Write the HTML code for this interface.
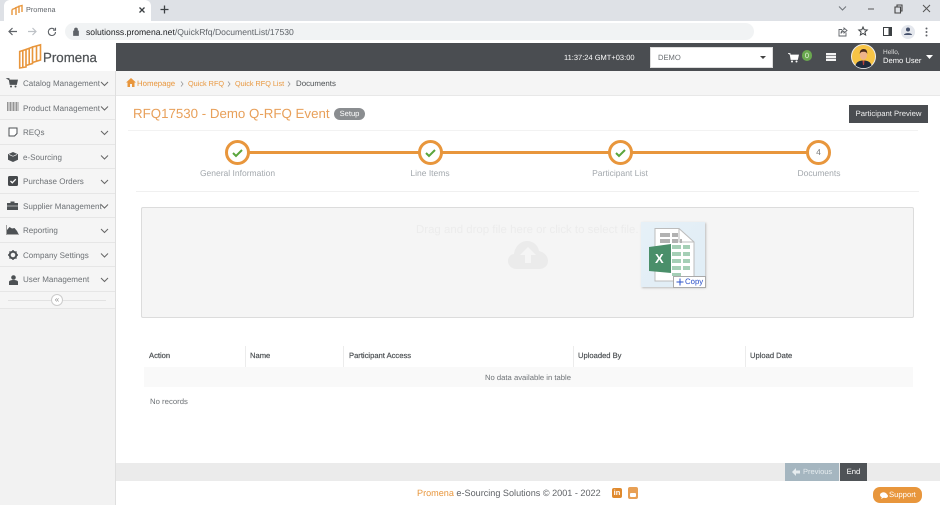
<!DOCTYPE html>
<html><head><meta charset="utf-8"><style>
*{box-sizing:border-box}
html,body{margin:0;padding:0;width:940px;height:505px;overflow:hidden;background:#fff;font-family:"Liberation Sans",sans-serif;text-rendering:geometricPrecision}
.a{position:absolute;white-space:nowrap}
svg{position:absolute;overflow:visible}
.mi{position:absolute;left:0;width:115px;height:24.5px;border-bottom:1px solid #e6e6e6;background:#f5f5f5}
.mi span{position:absolute;left:23px;top:6px;font-size:8.05px;line-height:14px;color:#6e7276;white-space:nowrap}
.st{position:absolute;width:25px;height:25px;border:3px solid #e8963c;border-radius:50%;background:#fff;top:140px}
.sl{position:absolute;top:167px;font-size:8.5px;line-height:12px;color:#a3a8ad;white-space:nowrap;transform:translateX(-50%)}
.th{position:absolute;top:350px;font-size:7.6px;line-height:12px;color:#4d5154;-webkit-text-stroke:.2px #4d5154;white-space:nowrap}
.tv{position:absolute;top:346px;width:1px;height:21px;background:#ececec}
.bc{position:absolute;top:78px;font-size:7.6px;line-height:12px;color:#e8963c;white-space:nowrap}
</style></head><body>

<!-- browser chrome -->
<div class="a" style="left:0;top:0;width:940px;height:21px;background:#dee1e6"></div>
<div class="a" style="left:4px;top:0;width:147px;height:21px;background:#fff;border-radius:6px 6px 0 0"></div>
<svg style="left:11px;top:5px" width="12" height="11" viewBox="0 0 12 11"><path d="M1 4.500L5 3V10M1 4.500V10M4 3L8 1.500V8M7 1.500L11 .5V7" fill="none" stroke="#e8963c" stroke-width="1.400"/></svg>
<div class="a" style="left:26px;top:4px;font-size:7.300px;line-height:12px;color:#5f6368">Promena</div>
<svg style="left:138px;top:6px" width="8" height="8" viewBox="0 0 8 8"><path d="M1.500 1.500L6.500 6.500M6.500 1.500L1.500 6.500" stroke="#3c4043" stroke-width="1.300"/></svg>
<svg style="left:160px;top:5px" width="9" height="9" viewBox="0 0 9 9"><path d="M4.500 .5V8.500M.5 4.500H8.500" stroke="#3c4043" stroke-width="1.300"/></svg>
<svg style="left:838px;top:5px" width="9" height="7" viewBox="0 0 9 7"><path d="M1 1.500L4.500 5L8 1.500" fill="none" stroke="#70757a" stroke-width="1"/></svg>
<svg style="left:867px;top:8px" width="8" height="2" viewBox="0 0 8 2"><path d="M1 1H7" stroke="#555" stroke-width="1"/></svg>
<svg style="left:894px;top:4px" width="9" height="10" viewBox="0 0 9 10"><path d="M1 3H6.500V9H1ZM3 3V1H8V7H6.500" fill="none" stroke="#444" stroke-width="1.100"/></svg>
<svg style="left:922px;top:4px" width="9" height="9" viewBox="0 0 9 9"><path d="M1 1L8 8M8 1L1 8" stroke="#555" stroke-width="1"/></svg>

<div class="a" style="left:0;top:21px;width:940px;height:22px;background:#fff"></div>
<svg style="left:8px;top:27px" width="10" height="9" viewBox="0 0 10 9"><path d="M9 4.500H1.500M4.500 1L1 4.500L4.500 8" fill="none" stroke="#5f6368" stroke-width="1.200"/></svg>
<svg style="left:27px;top:27px" width="10" height="9" viewBox="0 0 10 9"><path d="M1 4.500H8.500M5.500 1L9 4.500L5.500 8" fill="none" stroke="#bdc1c6" stroke-width="1.200"/></svg>
<svg style="left:47px;top:27px" width="10" height="10" viewBox="0 0 10 10"><path d="M8.500 5A3.600 3.600 0 1 1 7.400 2.300M8.500 .8V3.200H6.100" fill="none" stroke="#5f6368" stroke-width="1.100"/></svg>
<div class="a" style="left:65px;top:23px;width:689px;height:17px;border-radius:9px;background:#f1f3f4"></div>
<svg style="left:73px;top:27px" width="6" height="9" viewBox="0 0 6 9"><path d="M.5 4H5.500V8.500H.5ZM1.500 4V2.500A1.500 1.500 0 0 1 4.500 2.500V4" fill="#5f6368" stroke="#5f6368" stroke-width=".7"/></svg>
<div class="a" style="left:86px;top:25.500px;font-size:8.600px;line-height:13px;color:#202124">solutionss.promena.net<span style="color:#5f6368">/QuickRfq/DocumentList/17530</span></div>
<svg style="left:838px;top:27px" width="10" height="10" viewBox="0 0 10 10"><path d="M8 5.500V9H1V2.500H4M6 1L9 3.500L6 6V4.500C4.500 4.500 3.500 5 3 6.500C3 4.500 4.300 2.800 6 2.700Z" fill="none" stroke="#5f6368" stroke-width=".9"/></svg>
<svg style="left:858px;top:26px" width="10" height="10" viewBox="0 0 10 10"><path d="M5 1L6.200 3.800L9.200 4L6.900 6L7.600 9L5 7.400L2.400 9L3.100 6L.8 4L3.800 3.800Z" fill="none" stroke="#3c4043" stroke-width="1"/></svg>
<svg style="left:883px;top:27px" width="9" height="9" viewBox="0 0 9 9"><path d="M.5 .5H8.500V8.500H.5Z" fill="#fff" stroke="#3c4043"/><path d="M5.500 .5H8.500V8.500H5.500Z" fill="#3c4043"/></svg>
<div class="a" style="left:901px;top:25px;width:14px;height:14px;border-radius:50%;background:#e4e7ed"></div>
<svg style="left:904px;top:27px" width="8" height="9" viewBox="0 0 8 9"><circle cx="4" cy="2.500" r="2" fill="#44506b"/><path d="M0 8C0 5.500 8 5.500 8 8Z" fill="#44506b"/></svg>
<svg style="left:925px;top:27px" width="3" height="10" viewBox="0 0 3 10"><circle cx="1.500" cy="1.500" r="1" fill="#5f6368"/><circle cx="1.500" cy="5" r="1" fill="#5f6368"/><circle cx="1.500" cy="8.500" r="1" fill="#5f6368"/></svg>

<!-- logo -->
<div class="a" style="left:0;top:43px;width:116px;height:28px;background:#fff"></div>
<svg style="left:19px;top:44px" width="23" height="25" viewBox="0 0 23 25" fill="none" stroke="#e8963c" stroke-width="1.600"><path d="M.7 7.500L7 5.500V23L.7 24ZM3.800 6.800V23.500"/><path d="M7 5.500L13.500 3V19.500L7 21.500M10.200 4.500V20.500"/><path d="M13.500 3L21.500 .8V16L13.500 18.500M17.500 2V17.500"/></svg>
<div class="a" style="left:43px;top:48px;font-size:13.300px;line-height:20px;color:#4f5356;-webkit-text-stroke:.25px #4f5356">Promena</div>

<!-- top header -->
<div class="a" style="left:116px;top:43px;width:824px;height:28px;background:#4a4d51"></div>
<div class="a" style="left:564px;top:52px;font-size:7.500px;line-height:12px;color:#fff">11:37:24 GMT+03:00</div>
<div class="a" style="left:650px;top:47px;width:123px;height:21px;background:#fff;border:1px solid #ddd"></div>
<div class="a" style="left:658px;top:52px;font-size:7.600px;line-height:12px;color:#6b6f73">DEMO</div>
<svg style="left:760px;top:56px" width="6" height="3" viewBox="0 0 6 3"><path d="M0 0H6L3 3Z" fill="#444"/></svg>
<svg style="left:788px;top:53px" width="11" height="10" viewBox="0 0 11 10"><path d="M0 .5H2L3 6.500H9.500L10.500 2H2.300" fill="#fff" stroke="#fff" stroke-width=".8"/><circle cx="4" cy="8.500" r="1" fill="#fff"/><circle cx="8.500" cy="8.500" r="1" fill="#fff"/></svg>
<div class="a" style="left:802px;top:50px;width:10px;height:11px;border-radius:5px;background:#6aa84f;color:#e8f2e0;font-size:7.500px;line-height:11px;text-align:center">0</div>
<svg style="left:826px;top:53px" width="10" height="8" viewBox="0 0 10 8"><path d="M0 0H10V2.200H0ZM0 2.900H10V5.100H0ZM0 5.800H10V8H0Z" fill="#f4f4f4"/></svg>
<svg style="left:851px;top:44px" width="25" height="25" viewBox="0 0 25 25"><circle cx="12.500" cy="12.500" r="12" fill="#f7c446" stroke="#eee" stroke-width="1"/><path d="M4.500 21.500C5.500 17.500 9 16.500 12.500 16.500C16 16.500 19.500 17.500 20.500 21.500C16 25 9 25 4.500 21.500Z" fill="#1f2a3c"/><path d="M11.500 16.500H13.500L13 21H12Z" fill="#b8423c"/><ellipse cx="12.500" cy="11" rx="3.600" ry="4.800" fill="#eeb38b"/><path d="M8.800 10C8.500 6 11 5 12.500 5C15 5 16.500 6.500 16.200 10C15.500 8 14 7.800 12.500 7.800C11 7.800 9.500 8 8.800 10Z" fill="#4a2c1d"/></svg>
<div class="a" style="left:883px;top:46.500px;font-size:6.500px;line-height:11px;color:#ddd">Hello,</div>
<div class="a" style="left:883px;top:55px;font-size:7.600px;line-height:12px;color:#fff">Demo User</div>
<svg style="left:926px;top:55px" width="7" height="4" viewBox="0 0 7 4"><path d="M0 0H7L3.500 4Z" fill="#fff"/></svg>

<!-- sidebar -->
<div class="a" style="left:0;top:71px;width:116px;height:434px;background:#f2f2f2;border-right:1px solid #dfdfdf"></div>
<div class="mi" style="top:71px"><span>Catalog Management</span></div>
<div class="mi" style="top:95.500px"><span>Product Management</span></div>
<div class="mi" style="top:120px"><span>REQs</span></div>
<div class="mi" style="top:144.500px"><span>e-Sourcing</span></div>
<div class="mi" style="top:169px"><span>Purchase Orders</span></div>
<div class="mi" style="top:193.500px"><span>Supplier Management</span></div>
<div class="mi" style="top:218px"><span>Reporting</span></div>
<div class="mi" style="top:242.500px"><span>Company Settings</span></div>
<div class="mi" style="top:267px"><span>User Management</span></div>
<div class="a" style="left:0;top:291.500px;width:115px;height:17px;background:#f5f5f5;border-bottom:1px solid #e6e6e6"></div>
<div class="a" style="left:8px;top:300px;width:98px;height:1px;background:#e2e2e2"></div>
<div class="a" style="left:51px;top:294px;width:12px;height:12px;border-radius:50%;background:#fff;border:1px solid #ccc;color:#888;font-size:8px;line-height:9px;text-align:center">«</div>

<svg style="left:100px;top:81px" width="9" height="206" viewBox="0 0 9 206" fill="none" stroke="#666" stroke-width="1"><path d="M1 1L4.500 4.500L8 1M1 25.500L4.500 29L8 25.500M1 50L4.500 53.500L8 50M1 74.500L4.500 78L8 74.500M1 99L4.500 102.500L8 99M1 123.500L4.500 127L8 123.500M1 148L4.500 151.500L8 148M1 172.500L4.500 176L8 172.500M1 197L4.500 200.500L8 197"/></svg>
<!-- sidebar icons -->
<svg style="left:7px;top:78px" width="11" height="10" viewBox="0 0 11 10"><path d="M0 .5H2L3 6.500H9.500L10.500 2H2.300Z" fill="#4d5154" stroke="#4d5154" stroke-width=".8"/><circle cx="4" cy="8.500" r="1" fill="#4d5154"/><circle cx="8.500" cy="8.500" r="1" fill="#4d5154"/></svg>
<svg style="left:7px;top:102px" width="12" height="9" viewBox="0 0 12 9"><path d="M.5 0V9M2 0V9M3.500 0V9M5 0V9M6.500 0V9M8 0V9M9.500 0V9M11 0V9" stroke="#8a8a8a" stroke-width=".9"/></svg>
<svg style="left:8px;top:127px" width="10" height="10" viewBox="0 0 10 10"><path d="M1 1H9V6.500L6.500 9H1Z" fill="#fff" stroke="#4d5154" stroke-width="1"/></svg>
<svg style="left:8px;top:152px" width="10" height="10" viewBox="0 0 10 10"><path d="M5 0L10 2.200V7.800L5 10L0 7.800V2.200Z" fill="#4d5154"/><path d="M1 2.500L5 4.300L9 2.500" fill="none" stroke="#eee" stroke-width=".7"/></svg>
<svg style="left:8px;top:176px" width="10" height="10" viewBox="0 0 10 10"><rect width="10" height="10" rx="1.500" fill="#46494c"/><path d="M2.500 5L4.300 6.800L7.800 3.200" fill="none" stroke="#fff" stroke-width="1.300"/></svg>
<svg style="left:7px;top:201px" width="11" height="9" viewBox="0 0 11 9"><path d="M0 2H3.500V.5H7.500V2H11V9H0Z" fill="#4d5154"/><path d="M0 5H11" stroke="#eee" stroke-width=".6"/></svg>
<svg style="left:6px;top:225px" width="13" height="10" viewBox="0 0 13 10"><path d="M1 9V5L3.500 2L6 3.500L8.500 3L11 6L12.500 9Z" fill="#4d5154"/><path d="M.5 0V9.500H13" fill="none" stroke="#8a8a8a" stroke-width=".8"/></svg>
<svg style="left:8px;top:250px" width="10" height="10" viewBox="0 0 10 10"><circle cx="5" cy="5" r="3.300" fill="none" stroke="#4d5154" stroke-width="2"/><path d="M5 0V10M0 5H10M1.500 1.500L8.500 8.500M8.500 1.500L1.500 8.500" stroke="#4d5154" stroke-width="1.400" stroke-dasharray="1.600 6.800"/></svg>
<svg style="left:9px;top:275px" width="9" height="10" viewBox="0 0 9 10"><circle cx="4.500" cy="2.500" r="2.300" fill="#4d5154"/><path d="M0 10V7C0 5.500 2 5 4.500 5C7 5 9 5.500 9 7V10Z" fill="#4d5154"/></svg>

<!-- breadcrumb -->
<div class="a" style="left:116px;top:71px;width:824px;height:25px;background:#f5f5f5;border-bottom:1px solid #e8e8e8"></div>
<svg style="left:126px;top:78px" width="10" height="9" viewBox="0 0 10 9"><path d="M5 0L10 4.500H8.500V9H6V6H4V9H1.500V4.500H0Z" fill="#e8963c"/></svg>
<div class="bc" style="left:137px;font-size:7.800px">Homepage</div>
<svg style="left:180px;top:81px" width="4" height="6" viewBox="0 0 4 6"><path d="M1 .5L3 3L1 5.500" fill="none" stroke="#999" stroke-width=".8"/></svg>
<div class="bc" style="left:188px;font-size:7.300px">Quick RFQ</div>
<svg style="left:227px;top:81px" width="4" height="6" viewBox="0 0 4 6"><path d="M1 .5L3 3L1 5.500" fill="none" stroke="#999" stroke-width=".8"/></svg>
<div class="bc" style="left:235px;font-size:7.250px">Quick RFQ List</div>
<svg style="left:287px;top:81px" width="4" height="6" viewBox="0 0 4 6"><path d="M1 .5L3 3L1 5.500" fill="none" stroke="#999" stroke-width=".8"/></svg>
<div class="bc" style="left:296px;font-size:7.900px;color:#4d5154">Documents</div>

<!-- title -->
<div class="a" style="left:133px;top:105px;font-size:13.300px;line-height:18px;color:#e8a05a">RFQ17530 - Demo Q-RFQ Event</div>
<div class="a" style="left:334px;top:108px;width:31px;height:12px;border-radius:6px;background:#8a8d90;color:#fff;font-size:7.600px;line-height:12px;text-align:center">Setup</div>
<div class="a" style="left:849px;top:105px;width:79px;height:18px;background:#4a4d51;color:#f0f0f0;font-size:7.700px;line-height:18px;text-align:center">Participant Preview</div>
<div class="a" style="left:128px;top:130px;width:790px;height:1px;background:#f2f2f2"></div>

<!-- steps -->
<div class="a" style="left:237px;top:150.500px;width:582px;height:3px;background:#e8963c"></div>
<div class="st" style="left:225px"></div>
<div class="st" style="left:418px"></div>
<div class="st" style="left:608px"></div>
<div class="st" style="left:806px;color:#777;font-size:8.500px;line-height:19px;text-align:center">4</div>
<svg style="left:232px;top:149px" width="11" height="8" viewBox="0 0 11 8"><path d="M1 4L4 7L10 1" fill="none" stroke="#5aa53c" stroke-width="2"/></svg>
<svg style="left:425px;top:149px" width="11" height="8" viewBox="0 0 11 8"><path d="M1 4L4 7L10 1" fill="none" stroke="#5aa53c" stroke-width="2"/></svg>
<svg style="left:615px;top:149px" width="11" height="8" viewBox="0 0 11 8"><path d="M1 4L4 7L10 1" fill="none" stroke="#5aa53c" stroke-width="2"/></svg>
<div class="sl" style="left:237.500px">General Information</div>
<div class="sl" style="left:430px">Line Items</div>
<div class="sl" style="left:620px">Participant List</div>
<div class="sl" style="left:819px">Documents</div>
<div class="a" style="left:136px;top:191px;width:783px;height:1px;background:#f0f0f0"></div>

<!-- dropzone -->
<div class="a" style="left:141px;top:207px;width:773px;height:111px;background:#f5f5f5;border:1px solid #dcdcdc;border-radius:2px"></div>
<div class="a" style="left:416px;top:223px;font-size:11.450px;line-height:14px;color:#ececec">Drag and drop file here or click to select file.</div>
<svg style="left:508px;top:240px" width="40" height="30" viewBox="0 0 40 30"><path d="M9 29C3 29 0 25 0 21C0 17 3 14 6 14C7 6 13 1 19 1C25 1 30 5 31 11C36 12 40 16 40 21C40 26 36 29 31 29Z" fill="#ebebeb"/><path d="M20 7L28 15H23V23H17V15H12Z" fill="#f5f5f5"/></svg>

<!-- drag ghost -->
<div class="a" style="left:641px;top:222px;width:64px;height:65px;background:linear-gradient(135deg,#e6f0f7,#e0edf6);box-shadow:1px 1px 2px #bbb"></div>
<svg style="left:649px;top:228px" width="48" height="56" viewBox="0 0 48 56"><path d="M6 .5H30L45 14V53H6Z" fill="#fff" stroke="#bcbcbc"/><path d="M30 .5V14H45" fill="none" stroke="#bcbcbc"/><path d="M11 5H21V9H11ZM23 5H29V9H23ZM11 11H21V15H11ZM23 11H29V15H23ZM31 11H33V15H31Z" fill="#b2b2b2"/><path d="M23 17H32V21H23ZM34 17H41V21H34ZM23 24H32V28H23ZM34 24H41V28H34ZM23 31H32V35H23ZM34 31H41V35H34ZM23 38H32V42H23ZM34 38H41V42H34ZM23 45H32V48H23Z" fill="#a5cfb6"/><path d="M0 19L22 16V45L0 43Z" fill="#4a8f6a"/></svg>
<div class="a" style="left:655px;top:251px;font-size:13px;line-height:16px;font-weight:bold;color:#fff">X</div>
<div class="a" style="left:673px;top:276px;width:33px;height:12px;background:#fff;border:1px solid #aaa"></div>
<svg style="left:676px;top:278px" width="8" height="8" viewBox="0 0 8 8"><path d="M4 .5V7.500M.5 4H7.500" stroke="#2a50c8" stroke-width="1"/></svg>
<div class="a" style="left:685px;top:276px;font-size:7.800px;line-height:12px;color:#2a50c8">Copy</div>

<!-- table -->
<div class="th" style="left:149px">Action</div>
<div class="th" style="left:250px">Name</div>
<div class="th" style="left:349px">Participant Access</div>
<div class="th" style="left:578px">Uploaded By</div>
<div class="th" style="left:750px">Upload Date</div>
<div class="tv" style="left:245px"></div>
<div class="tv" style="left:343px"></div>
<div class="tv" style="left:573px"></div>
<div class="tv" style="left:745px"></div>
<div class="a" style="left:144px;top:367px;width:769px;height:20px;background:#f9f9f9"></div>
<div class="a" style="left:485px;top:371.500px;font-size:7.660px;line-height:12px;color:#6e7276">No data available in table</div>
<div class="a" style="left:150px;top:396px;font-size:7.750px;line-height:12px;color:#6e7276">No records</div>

<!-- bottom bar -->
<div class="a" style="left:116px;top:463px;width:824px;height:18px;background:#ebebeb"></div>
<div class="a" style="left:785px;top:463px;width:54px;height:18px;background:#a5b6c0;color:#e6ecef;font-size:7.500px;line-height:18px;padding-left:18px">Previous</div>
<svg style="left:792px;top:468px" width="8" height="8" viewBox="0 0 8 8"><path d="M4 0L0 4L4 8V5.500H8V2.500H4Z" fill="#e6ecef"/></svg>
<div class="a" style="left:840px;top:463px;width:27px;height:18px;background:#4f5357;color:#fff;font-size:7.700px;line-height:18px;text-align:center">End</div>

<!-- footer -->
<div class="a" style="left:417px;top:487px;font-size:9.110px;line-height:13px;color:#5f6266"><span style="color:#e8963c">Promena</span> e-Sourcing Solutions © 2001 - 2022</div>
<div class="a" style="left:612px;top:488px;width:10px;height:10px;border-radius:2px;background:#e08a2e;color:#fff;font-size:7.500px;font-weight:bold;line-height:10px;text-align:center">in</div>
<div class="a" style="left:628px;top:487px;width:10px;height:12px;border-radius:2px;background:#e8a055"></div>
<div class="a" style="left:630px;top:493px;width:6px;height:4px;background:#fff;border-radius:1px"></div>
<div class="a" style="left:873px;top:487px;width:49px;height:16px;border-radius:7px;background:#e8963c;color:#fff;font-size:7.700px;line-height:16px;padding-left:16px">Support</div>
<svg style="left:880px;top:492px" width="8" height="7" viewBox="0 0 8 7"><ellipse cx="3.500" cy="3" rx="3.500" ry="2.700" fill="#fff"/><path d="M2 5L1 7L4 5.500Z" fill="#fff"/><ellipse cx="5.500" cy="4" rx="2.500" ry="2" fill="#fff"/></svg>

</body></html>
